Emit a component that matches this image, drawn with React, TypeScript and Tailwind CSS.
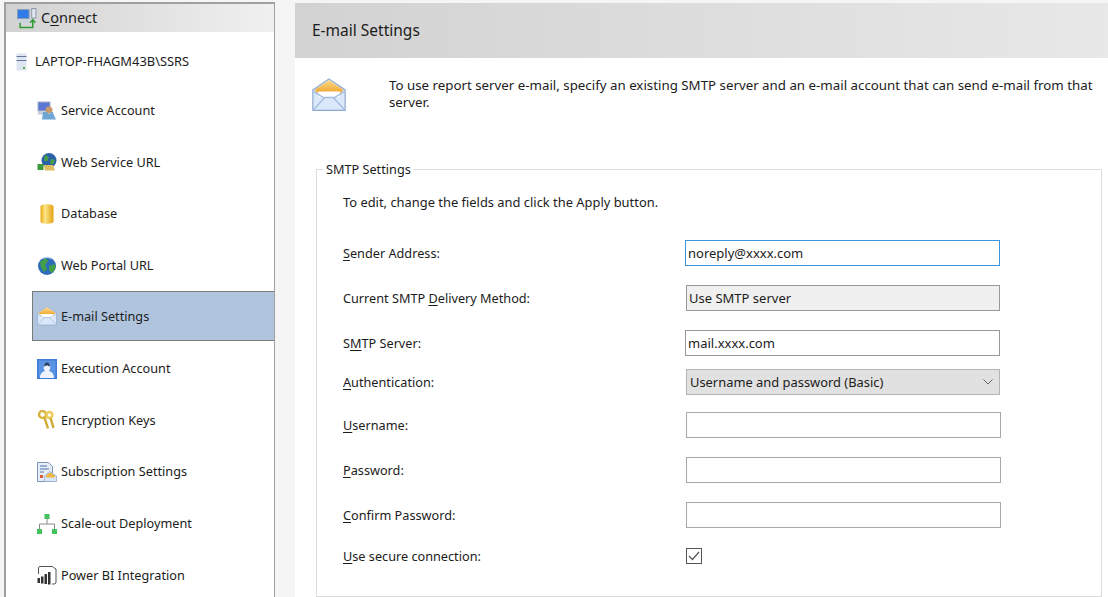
import React from 'react';

const Icon: React.FC<{ children: React.ReactNode; size?: number }> = ({ children, size = 20 }) => (
  <svg width={size} height={size} viewBox="0 0 20 20" className="shrink-0">{children}</svg>
);

const ConnectIcon = () => (
  <Icon size={21}>
    <rect x="0.500" y="1.500" width="11" height="8.500" fill="#2f7be8" stroke="#8a9bb5" />
    <rect x="1" y="11" width="11" height="3" fill="#c9d3df" />
    <rect x="14" y="0.500" width="4" height="9" fill="#e3e8f0" stroke="#8f9bad" />
    <path d="M3 14v4.500h12V12M12.500 14l2.500-3 2.500 3" fill="none" stroke="#2f9b35" strokeWidth="1.400" />
  </Icon>
);

const ServerIcon = () => (
  <svg width="11" height="18" viewBox="0 0 11 18" className="shrink-0">
    <rect x="0.500" y="0.500" width="10" height="17" fill="#dde5f0" />
    <path d="M0.500 3.500h10M0.500 7.500h10" stroke="#64779a" />
    <rect x="7" y="14" width="2" height="2" fill="#54b04c" />
  </svg>
);

const ServiceIcon = () => (
  <Icon>
    <rect x="1" y="1" width="12" height="9" fill="#5d78d4" stroke="#a5b0c8" />
    <rect x="1" y="10.500" width="10" height="3" fill="#c6cfdc" />
    <circle cx="12" cy="9" r="3.500" fill="#c89a6c" />
    <path d="M6 11h3.500l2.500 2 2.500-2H16l-0 1 3 6.500H5z" fill="#6ea6d6" />
  </Icon>
);

const WebServiceIcon = () => (
  <Icon>
    <circle cx="12" cy="8.500" r="7.500" fill="#2a62a8" />
    <path d="M8 2.500l4 3-2 4-3-1zM14 7l4 1-2 4.500-3-1z" fill="#4b9d48" />
    <rect x="0.500" y="12" width="6" height="6" fill="#3f9a3b" />
    <path d="M7 13h9l2 5.500H8z" fill="#dcbc60" />
  </Icon>
);

const DatabaseIcon = () => (
  <Icon>
    <defs>
      <linearGradient id="db" x1="0" x2="1" y1="0" y2="0">
        <stop offset="0" stopColor="#e8a812" />
        <stop offset="0.350" stopColor="#fde68a" />
        <stop offset="1" stopColor="#e2a010" />
      </linearGradient>
    </defs>
    <path d="M3.500 2.500c0-3 13-3 13 0v15c0 3-13 3-13 0z" fill="url(#db)" />
  </Icon>
);

const GlobeIcon = () => (
  <Icon>
    <circle cx="10" cy="10" r="9" fill="#2d6cb8" />
    <path d="M3 6l6-4 2 3-3 4 2 4-3 3-3-5zM12 10l6-2 .5 4-3 5-3-2z" fill="#43a047" />
    <path d="M6 2.500a8 8 0 0 1 8 0" stroke="#b7d6f2" strokeWidth="1.200" fill="none" />
  </Icon>
);

const MailIcon = ({ size = 20, id }: { size?: number; id: string }) => (
  <Icon size={size}>
    <defs>
      <linearGradient id={id} x1="0" x2="0" y1="0" y2="1">
        <stop offset="0" stopColor="#fbd98a" />
        <stop offset="1" stopColor="#eea52a" />
      </linearGradient>
    </defs>
    <path d="M0.500 7L10 0.500 19.500 7v12h-19z" fill="#dbe8f9" stroke="#8fa9cd" strokeWidth=".7" />
    <path d="M1.500 7L10 1.200 18.500 7 16.500 9h-13z" fill={`url(#${id})`} />
    <path d="M3.500 8h13L16 11.500H4z" fill="#fff" />
    <path d="M1 18.500l6.500-7h5l6.500 7M1 8l6.500 4M19 8l-6.500 4" fill="none" stroke="#a4bde0" strokeWidth=".8" />
  </Icon>
);

const ExecutionIcon = () => (
  <Icon>
    <rect x="0" y="0" width="20" height="20" fill="#3f7ad6" />
    <rect x="1.500" y="1.500" width="17" height="17" fill="#5b94e4" />
    <path d="M3 19c0-4 2-6 5-7-2-2-2-8 2-8s4 6 2 8c3 1 5 3 5 7z" fill="#eef3fb" />
    <path d="M7 8c0-3 1-4.500 3-4.500s3 1.500 3 4.500c-1-2-5-2-6 0z" fill="#2a3a66" />
  </Icon>
);

const KeysIcon = () => (
  <Icon>
    <circle cx="5.500" cy="4.500" r="3.500" fill="none" stroke="#d8b23e" strokeWidth="2.400" />
    <circle cx="12.500" cy="5" r="3" fill="none" stroke="#ecca5c" strokeWidth="2.400" />
    <path d="M7.500 7.500l3.500 11M13.500 8l3 10" stroke="#d2aa33" strokeWidth="2.400" />
  </Icon>
);

const SubscriptionIcon = () => (
  <Icon>
    <path d="M0.500 0.500h11l4 4v15H0.500z" fill="#e6edf7" stroke="#7f93b5" />
    <path d="M3 4h7M3 7h9M3 10h4" stroke="#5472a6" />
    <rect x="3" y="13" width="3" height="3" fill="#d8583a" />
    <path d="M7.500 19.500v-5.500l5.500-4.500 6.500 4.500v5.500z" fill="#d9e6f7" stroke="#8aa5cc" strokeWidth=".7" />
    <path d="M8.500 14l4.500-3.500 5.500 3.500-1 1.500h-8z" fill="#eeb53d" />
  </Icon>
);

const ScaleOutIcon = () => (
  <Icon>
    <path d="M10 4v6M2.500 15v-5h15v5" fill="none" stroke="#8a8a8a" />
    <rect x="7.500" y="0" width="5" height="5" fill="#41c25a" />
    <rect x="0" y="15" width="5" height="5" fill="#41c25a" />
    <rect x="15" y="15" width="5" height="5" fill="#41c25a" />
  </Icon>
);

const PowerBiIcon = () => (
  <Icon>
    <path d="M1.500 9V3q0-1.500 1.500-1.500h12q1 0 1.500 1l2.500 1.500v13q0 2-2 2h-2" fill="none" stroke="#555" />
    <rect x="0.500" y="13" width="2.500" height="5" fill="#333" />
    <rect x="4" y="11.500" width="2.500" height="7" fill="#333" />
    <rect x="7.500" y="9" width="2.500" height="10" fill="#333" />
    <rect x="11" y="7" width="2.500" height="12.500" fill="#333" />
  </Icon>
);

const navItems = [
  { label: 'Service Account', icon: <ServiceIcon /> },
  { label: 'Web Service URL', icon: <WebServiceIcon /> },
  { label: 'Database', icon: <DatabaseIcon /> },
  { label: 'Web Portal URL', icon: <GlobeIcon /> },
  { label: 'E-mail Settings', icon: <MailIcon id="mail-nav" />, active: true },
  { label: 'Execution Account', icon: <ExecutionIcon /> },
  { label: 'Encryption Keys', icon: <KeysIcon /> },
  { label: 'Subscription Settings', icon: <SubscriptionIcon /> },
  { label: 'Scale-out Deployment', icon: <ScaleOutIcon /> },
  { label: 'Power BI Integration', icon: <PowerBiIcon /> },
];

const Label: React.FC<{ pre?: string; u: string; post: string }> = ({ pre = '', u, post }) => (
  <span className="w-[343px] shrink-0 text-[12.7px]">
    {pre}<span className="underline underline-offset-2">{u}</span>{post}
  </span>
);

const boxClass = 'h-[26px] border-[1.5px] px-[2px] flex items-center text-[13px]';

export default function App() {
  return (
    <div className="w-[1108px] h-[597px] overflow-hidden bg-[#f5f5f5] flex text-[12.7px] text-[#1c1c1c] pt-[2px] pl-[4px] font-['Noto_Sans','Liberation_Sans',sans-serif]">
      <aside className="w-[271px] h-full shrink-0 bg-white border-l-2 border-t-2 border-r border-[#a0a0a0] flex flex-col">
        <div className="h-[28px] shrink-0 flex items-center gap-[3px] pl-[11px] text-[14.5px] bg-gradient-to-r from-[#d2d2d2] to-[#f0f0f0]">
          <ConnectIcon />
          <span>C<span className="underline underline-offset-2">o</span>nnect</span>
        </div>
        <div className="h-[30px] mt-[15px] flex items-center gap-[8px] pl-[10px] shrink-0 text-[12.9px]">
          <ServerIcon />
          <span>LAPTOP-FHAGM43B\SSRS</span>
        </div>
        <nav className="flex flex-col pl-[26px] mt-[8px]">
          {navItems.map(item => (
            <div
              key={item.label}
              className={item.active
                ? 'h-[50px] mb-[1.6px] shrink-0 flex items-center gap-[4px] pl-[4px] bg-[#b0c4de] border border-r-0 border-[#7a7a7a]'
                : 'h-[51.6px] shrink-0 flex items-center gap-[4px] pl-[5px]'}
            >
              {item.icon}
              <span>{item.label}</span>
            </div>
          ))}
        </nav>
      </aside>

      <main className="ml-[20px] mt-[1px] w-[813px] h-[594px] shrink-0 bg-white flex flex-col">
        <header className="h-[55px] shrink-0 bg-gradient-to-r from-[#d2d2d2] to-[#e8e8e8] flex items-center pl-[17px] text-[15.5px]">E-mail Settings</header>
        <div className="flex gap-[43px] pl-[17px] mt-[20px] h-[70px] shrink-0">
          <MailIcon size={34} id="mail-big" />
          <p className="w-[720px] leading-[17px] text-[13.3px] -mt-[1px]">
            To use report server e-mail, specify an existing SMTP server and an e-mail account that can send e-mail from that server.
          </p>
        </div>
        <fieldset className="ml-[21px] w-[786px] mt-[12px] border border-[#dcdcdc] pl-[26px] flex-1 min-h-0">
          <legend className="-ml-[20px] px-[3px] text-[12.7px]">SMTP Settings</legend>
          <p className="mt-[14px] text-[12.9px]">To edit, change the fields and click the Apply button.</p>
          <div className="mt-[28px] flex items-center h-[26px]">
            <Label u="S" post="ender Address:" />
            <div className={`${boxClass} w-[315px] -ml-[1px] bg-white border-[#3f95dc]`}>noreply@xxxx.com</div>
          </div>
          <div className="mt-[19px] flex items-center h-[26px]">
            <Label pre="Current SMTP " u="D" post="elivery Method:" />
            <div className={`${boxClass} w-[314px] bg-[#f0f0f0] border-[#999999]`}>Use SMTP server</div>
          </div>
          <div className="mt-[19px] flex items-center h-[26px]">
            <Label pre="S" u="M" post="TP Server:" />
            <div className={`${boxClass} w-[315px] -ml-[1px] bg-white border-[#999999]`}>mail.xxxx.com</div>
          </div>
          <div className="mt-[13px] flex items-center h-[26px]">
            <Label u="A" post="uthentication:" />
            <div className="w-[314px] h-[26px] border-[1.5px] border-[#b4b4b4] bg-[#e1e1e1] pl-[3px] pr-[6px] flex items-center justify-between text-[12.9px]">
              <span>Username and password (Basic)</span>
              <svg width="10" height="6" viewBox="0 0 10 6"><path d="M.5.500L5 5 9.500.500" fill="none" stroke="#666" /></svg>
            </div>
          </div>
          <div className="mt-[17px] flex items-center h-[26px]">
            <Label u="U" post="sername:" />
            <div className={`${boxClass} w-[315px] bg-white border-[#a8a8a8]`} />
          </div>
          <div className="mt-[19px] flex items-center h-[26px]">
            <Label u="P" post="assword:" />
            <div className={`${boxClass} w-[315px] bg-white border-[#a8a8a8]`} />
          </div>
          <div className="mt-[19px] flex items-center h-[26px]">
            <Label u="C" post="onfirm Password:" />
            <div className={`${boxClass} w-[315px] bg-white border-[#a8a8a8]`} />
          </div>
          <div className="mt-[15px] flex items-center h-[26px]">
            <Label u="U" post="se secure connection:" />
            <svg width="16" height="16" viewBox="0 0 16 16">
              <rect x=".5" y=".5" width="15" height="15" fill="#fff" stroke="#555" />
              <path d="M3 8l3.500 3.500L13 4" fill="none" stroke="#555" strokeWidth="1.200" />
            </svg>
          </div>
        </fieldset>
      </main>
    </div>
  );
}
